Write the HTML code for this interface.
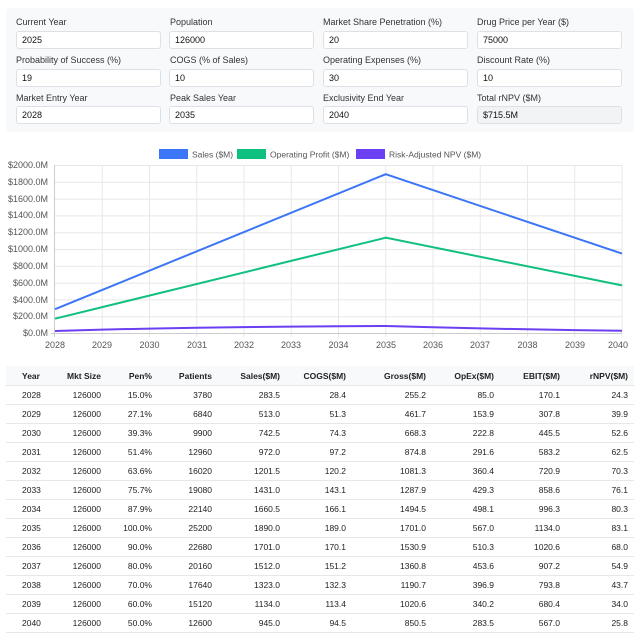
<!DOCTYPE html>
<html><head><meta charset="utf-8"><style>
*{margin:0;padding:0;box-sizing:border-box}
body{width:640px;height:635px;background:#fff;font-family:"Liberation Sans",Arial,sans-serif;position:relative;overflow:hidden;color:#222}
.panel{position:absolute;left:6px;top:8px;width:628px;height:124px;background:#f8f9fb;border-radius:4px}
.lb{position:absolute;font-size:9px;color:#333;line-height:10px}
.in{position:absolute;width:145px;height:18px;background:#fff;border:1px solid #dde1e6;border-radius:3px;font-size:9px;line-height:16px;padding-left:5px;color:#111}
.row{position:absolute;left:6px;width:628px;height:19px;border-bottom:1px solid #e5e7eb;font-size:8.5px}
.row span{position:absolute;top:0;line-height:19px}
.hd{background:#f8f9fa;font-weight:bold;height:20px;top:366px}
.hd span{line-height:20px}
</style></head><body>
<div class="panel"></div>
<div class="lb" style="left:16px;top:17px">Current Year</div><div class="in" style="left:16px;top:31px">2025</div>
<div class="lb" style="left:170px;top:17px">Population</div><div class="in" style="left:169px;top:31px">126000</div>
<div class="lb" style="left:323px;top:17px">Market Share Penetration (%)</div><div class="in" style="left:323px;top:31px">20</div>
<div class="lb" style="left:477px;top:17px">Drug Price per Year ($)</div><div class="in" style="left:477px;top:31px">75000</div>
<div class="lb" style="left:16px;top:55px">Probability of Success (%)</div><div class="in" style="left:16px;top:69px">19</div>
<div class="lb" style="left:170px;top:55px">COGS (% of Sales)</div><div class="in" style="left:169px;top:69px">10</div>
<div class="lb" style="left:323px;top:55px">Operating Expenses (%)</div><div class="in" style="left:323px;top:69px">30</div>
<div class="lb" style="left:477px;top:55px">Discount Rate (%)</div><div class="in" style="left:477px;top:69px">10</div>
<div class="lb" style="left:16px;top:93px">Market Entry Year</div><div class="in" style="left:16px;top:106px">2028</div>
<div class="lb" style="left:170px;top:93px">Peak Sales Year</div><div class="in" style="left:169px;top:106px">2035</div>
<div class="lb" style="left:323px;top:93px">Exclusivity End Year</div><div class="in" style="left:323px;top:106px">2040</div>
<div class="lb" style="left:477px;top:93px">Total rNPV ($M)</div><div class="in" style="left:477px;top:106px;background:#f1f3f5">$715.5M</div>

<svg style="position:absolute;left:0;top:140px" width="640" height="220" viewBox="0 140 640 220" font-family="Liberation Sans,Arial,sans-serif" font-size="9" fill="#555">
<g font-size="8.5">
<rect x="159" y="149" width="29" height="10" fill="#3b76f6"/><text x="192" y="157.5">Sales ($M)</text>
<rect x="237" y="149" width="29" height="10" fill="#10c07f"/><text x="270" y="157.5">Operating Profit ($M)</text>
<rect x="356" y="149" width="29" height="10" fill="#6b3ff2"/><text x="389" y="157.5">Risk-Adjusted NPV ($M)</text>
</g>
<g stroke="#e8e8e8" stroke-width="1">
<line x1="55" y1="165.5" x2="622" y2="165.5"/><line x1="55" y1="182.3" x2="622" y2="182.3"/><line x1="55" y1="199.1" x2="622" y2="199.1"/><line x1="55" y1="215.9" x2="622" y2="215.9"/><line x1="55" y1="232.7" x2="622" y2="232.7"/><line x1="55" y1="249.5" x2="622" y2="249.5"/><line x1="55" y1="266.3" x2="622" y2="266.3"/><line x1="55" y1="283.1" x2="622" y2="283.1"/><line x1="55" y1="299.9" x2="622" y2="299.9"/><line x1="55" y1="316.7" x2="622" y2="316.7"/>
<line x1="102.25" y1="165" x2="102.25" y2="337"/><line x1="149.5" y1="165" x2="149.5" y2="337"/><line x1="196.75" y1="165" x2="196.75" y2="337"/><line x1="244" y1="165" x2="244" y2="337"/><line x1="291.25" y1="165" x2="291.25" y2="337"/><line x1="338.5" y1="165" x2="338.5" y2="337"/><line x1="385.75" y1="165" x2="385.75" y2="337"/><line x1="433" y1="165" x2="433" y2="337"/><line x1="480.25" y1="165" x2="480.25" y2="337"/><line x1="527.5" y1="165" x2="527.5" y2="337"/><line x1="574.75" y1="165" x2="574.75" y2="337"/><line x1="622" y1="165" x2="622" y2="337"/>
</g>
<line x1="54.5" y1="165" x2="54.5" y2="337" stroke="#ccc"/><line x1="51" y1="333.5" x2="622" y2="333.5" stroke="#ccc"/>
<g text-anchor="end">
<text x="48" y="168">$2000.0M</text><text x="48" y="185">$1800.0M</text><text x="48" y="202">$1600.0M</text><text x="48" y="218">$1400.0M</text><text x="48" y="235">$1200.0M</text><text x="48" y="252">$1000.0M</text><text x="48" y="269">$800.0M</text><text x="48" y="286">$600.0M</text><text x="48" y="303">$400.0M</text><text x="48" y="319">$200.0M</text><text x="48" y="336">$0.0M</text>
</g>
<g text-anchor="middle">
<text x="55" y="348">2028</text><text x="102" y="348">2029</text><text x="149.5" y="348">2030</text><text x="197" y="348">2031</text><text x="244" y="348">2032</text><text x="291" y="348">2033</text><text x="338.5" y="348">2034</text><text x="386" y="348">2035</text><text x="433" y="348">2036</text><text x="480" y="348">2037</text><text x="527.5" y="348">2038</text><text x="575" y="348">2039</text><text x="618" y="348">2040</text>
</g>
<polyline fill="none" stroke="#3b76f6" stroke-width="2" points="55,309.2 385.75,174.2 622,253.6"/>
<polyline fill="none" stroke="#10c07f" stroke-width="2" points="55,318.7 385.75,237.7 622,285.4"/>
<polyline fill="none" stroke="#6b3ff2" stroke-width="2" points="55,331 102.25,329.6 149.5,328.6 196.75,327.8 244,327.1 291.25,326.6 338.5,326.3 385.75,326 433,327.3 480.25,328.4 527.5,329.3 574.75,330.1 622,330.8"/>
</svg>

<div id="t"></div>
<script>
var R=[16,95,146,206,274,340,420,488,554,622];
var H=["Year","Mkt Size","Pen%","Patients","Sales($M)","COGS($M)","Gross($M)","OpEx($M)","EBIT($M)","rNPV($M)"];
var D=[
[2028,126000,"15.0%",3780,"283.5","28.4","255.2","85.0","170.1","24.3"],
[2029,126000,"27.1%",6840,"513.0","51.3","461.7","153.9","307.8","39.9"],
[2030,126000,"39.3%",9900,"742.5","74.3","668.3","222.8","445.5","52.6"],
[2031,126000,"51.4%",12960,"972.0","97.2","874.8","291.6","583.2","62.5"],
[2032,126000,"63.6%",16020,"1201.5","120.2","1081.3","360.4","720.9","70.3"],
[2033,126000,"75.7%",19080,"1431.0","143.1","1287.9","429.3","858.6","76.1"],
[2034,126000,"87.9%",22140,"1660.5","166.1","1494.5","498.1","996.3","80.3"],
[2035,126000,"100.0%",25200,"1890.0","189.0","1701.0","567.0","1134.0","83.1"],
[2036,126000,"90.0%",22680,"1701.0","170.1","1530.9","510.3","1020.6","68.0"],
[2037,126000,"80.0%",20160,"1512.0","151.2","1360.8","453.6","907.2","54.9"],
[2038,126000,"70.0%",17640,"1323.0","132.3","1190.7","396.9","793.8","43.7"],
[2039,126000,"60.0%",15120,"1134.0","113.4","1020.6","340.2","680.4","34.0"],
[2040,126000,"50.0%",12600,"945.0","94.5","850.5","283.5","567.0","25.8"]];
function row(c,top,cls){var h='<div class="row '+cls+'" style="top:'+top+'px">';
for(var i=0;i<10;i++){if(i==0)h+='<span style="left:'+R[0]+'px">'+c[i]+'</span>';else h+='<span style="right:'+(628-R[i])+'px">'+c[i]+'</span>';}
return h+'</div>';}
var s=row(H,366,'hd');for(var j=0;j<D.length;j++)s+=row(D[j],386+19*j,'');
document.getElementById('t').innerHTML=s;
</script>
</body></html>
